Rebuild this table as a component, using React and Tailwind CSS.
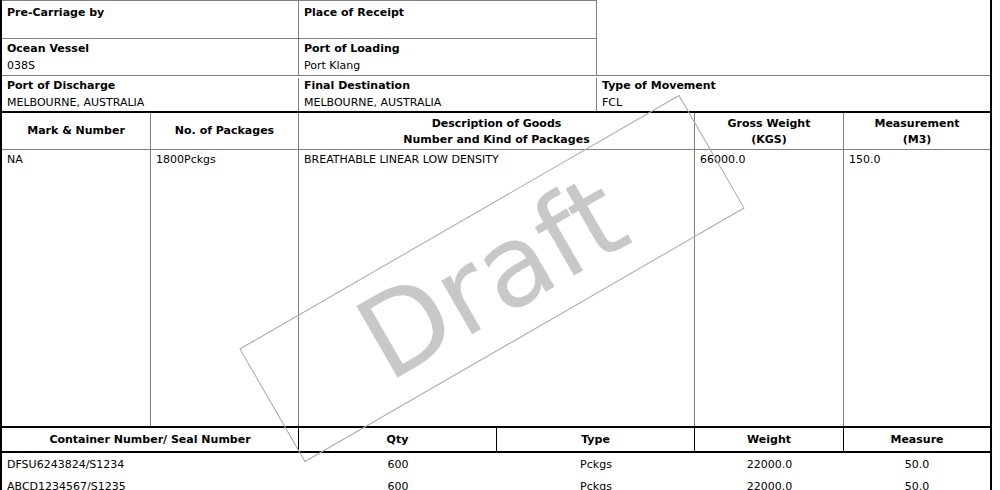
const topRows = [
  [
    { label: 'Pre-Carriage by', value: '' },
    { label: 'Place of Receipt', value: '' },
  ],
  [
    { label: 'Ocean Vessel', value: '038S' },
    { label: 'Port of Loading', value: 'Port Klang' },
  ],
]

const containers = [
  { no: 'DFSU6243824/S1234', qty: '600', type: 'Pckgs', weight: '22000.0', measure: '50.0' },
  { no: 'ABCD1234567/S1235', qty: '600', type: 'Pckgs', weight: '22000.0', measure: '50.0' },
]

function Field({ label, value }) {
  return (
    <>
      <div className="font-bold">{label}</div>
      {value && <div className="mt-[1px]">{value}</div>}
    </>
  )
}

export default function App() {
  return (
    <div className="relative w-[992px] bg-white text-[11px] leading-4 text-black font-['DejaVu_Sans','Liberation_Sans',sans-serif] border-x-2 border-black overflow-hidden">
      {/* shipping details */}
      <div className="flex">
        <div className="w-[595px]">
          {topRows.map((row, i) => (
            <div key={i} className={i === 0 ? 'flex h-[38px]' : 'flex h-[37px]'}>
              <div className={`w-[297px] border-t border-r border-[#808080] pl-[5px] ${i === 0 ? 'pt-[4px]' : 'pt-[2px]'}`}>
                <Field {...row[0]} />
              </div>
              <div className={`w-[298px] border-t border-r border-[#808080] pl-[5px] ${i === 0 ? 'pt-[4px]' : 'pt-[2px]'}`}>
                <Field {...row[1]} />
              </div>
            </div>
          ))}
        </div>
        <div className="flex-1" />
      </div>
      <div className="flex h-[38px] border-t border-[#808080] border-b-2 border-b-black pt-[2px]">
        <div className="w-[297px] border-r border-[#808080] pl-[5px]">
          <Field label="Port of Discharge" value="MELBOURNE, AUSTRALIA" />
        </div>
        <div className="w-[298px] border-r border-[#808080] pl-[5px]">
          <Field label="Final Destination" value="MELBOURNE, AUSTRALIA" />
        </div>
        <div className="flex-1 pl-[5px]">
          <Field label="Type of Movement" value="FCL" />
        </div>
      </div>

      {/* goods */}
      <div className="flex h-[37px] border-b border-[#808080] font-bold text-center">
        <div className="w-[149px] border-r border-[#808080] flex items-center justify-center">Mark &amp; Number</div>
        <div className="w-[148px] border-r border-[#808080] flex items-center justify-center">No. of Packages</div>
        <div className="w-[396px] border-r border-[#808080] flex flex-col items-center justify-center pt-[2px]">
          <div>Description of Goods</div>
          <div>Number and Kind of Packages</div>
        </div>
        <div className="w-[149px] border-r border-[#808080] flex flex-col items-center justify-center pt-[2px]">
          <div>Gross Weight</div>
          <div>(KGS)</div>
        </div>
        <div className="flex-1 flex flex-col items-center justify-center pt-[2px]">
          <div>Measurement</div>
          <div>(M3)</div>
        </div>
      </div>
      <div className="flex h-[278px] border-b-2 border-black">
        <div className="w-[149px] border-r border-[#808080] pl-[5px] pt-[2px]">NA</div>
        <div className="w-[148px] border-r border-[#808080] pl-[5px] pt-[2px]">1800Pckgs</div>
        <div className="w-[396px] border-r border-[#808080] pl-[5px] pt-[2px]">BREATHABLE LINEAR LOW DENSITY</div>
        <div className="w-[149px] border-r border-[#808080] pl-[5px] pt-[2px]">66000.0</div>
        <div className="flex-1 pl-[5px] pt-[2px]">150.0</div>
      </div>

      {/* containers */}
      <div className="flex h-[25px] border-b-2 border-black font-bold">
        <div className="w-[297px] border-r border-black flex items-center justify-center">Container Number/ Seal Number</div>
        <div className="w-[198px] border-r border-black flex items-center justify-center">Qty</div>
        <div className="w-[198px] border-r border-black flex items-center justify-center">Type</div>
        <div className="w-[149px] border-r border-black flex items-center justify-center">Weight</div>
        <div className="flex-1 flex items-center justify-center">Measure</div>
      </div>
      {containers.map((c) => (
        <div key={c.no} className="flex h-[22px] pt-[4px]">
          <div className="w-[297px] pl-[5px]">{c.no}</div>
          <div className="w-[198px] text-center">{c.qty}</div>
          <div className="w-[198px] text-center">{c.type}</div>
          <div className="w-[149px] text-center">{c.weight}</div>
          <div className="flex-1 text-center">{c.measure}</div>
        </div>
      ))}

      {/* draft watermark */}
      <div className="pointer-events-none absolute left-[236px] top-[213px] w-[508px] h-[131px] -rotate-30 border-[1.5px] border-[#aaaaaa] flex items-center justify-center">
        <span className="text-[113px] leading-none text-[#c8c8c8] font-['DejaVu_Sans',sans-serif]">Draft</span>
      </div>
    </div>
  )
}
